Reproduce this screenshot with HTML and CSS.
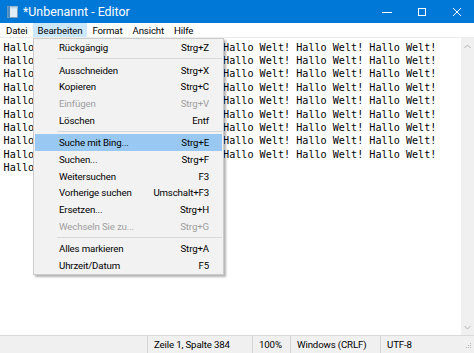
FILE: index.html
```html
<!DOCTYPE html>
<html lang="de">
<head>
  <meta charset="UTF-8" />
  <title>*Unbenannt - Editor</title>
  <link rel="stylesheet" href="styles.css">
</head>
<body>
  <div class="window">
    <div class="titlebar">
      <svg class="app-icon" width="11" height="12" viewBox="0 0 11 12">
        <rect x="0.5" y="0.5" width="10" height="11" fill="#e4eef7" stroke="#7d9fbd"/>
        <rect x="0.5" y="0.5" width="2.5" height="11" fill="#4f8cc4"/>
        <rect x="3" y="0.5" width="7.5" height="2" fill="#bcd3e8"/>
      </svg>
      <span class="title">*Unbenannt - Editor</span>
      <div class="controls">
        <span class="ctl"><svg width="10" height="10" viewBox="0 0 10 10"><line x1="0" y1="5.5" x2="10" y2="5.5" stroke="#fff" stroke-width="1"/></svg></span>
        <span class="ctl"><svg width="10" height="10" viewBox="0 0 10 10"><rect x="1.5" y="1.5" width="7" height="7" fill="none" stroke="#fff" stroke-width="1"/></svg></span>
        <span class="ctl"><svg width="10" height="10" viewBox="0 0 10 10"><path d="M1 1 L9 9 M9 1 L1 9" stroke="#fff" stroke-width="1"/></svg></span>
      </div>
    </div>

    <div class="menubar">
      <span class="menu-item">Datei</span>
      <span class="menu-item active">Bearbeiten</span>
      <span class="menu-item">Format</span>
      <span class="menu-item">Ansicht</span>
      <span class="menu-item">Hilfe</span>
    </div>

    <div class="main">
      <div class="editor">Hallo Welt! Hallo Welt! Hallo Welt! Hallo Welt! Hallo Welt! Hallo Welt!
Hallo Welt! Hallo Welt! Hallo Welt! Hallo Welt! Hallo Welt! Hallo Welt!
Hallo Welt! Hallo Welt! Hallo Welt! Hallo Welt! Hallo Welt! Hallo Welt!
Hallo Welt! Hallo Welt! Hallo Welt! Hallo Welt! Hallo Welt! Hallo Welt!
Hallo Welt! Hallo Welt! Hallo Welt! Hallo Welt! Hallo Welt! Hallo Welt!
Hallo Welt! Hallo Welt! Hallo Welt! Hallo Welt! Hallo Welt! Hallo Welt!
Hallo Welt! Hallo Welt! Hallo Welt! Hallo Welt! Hallo Welt! Hallo Welt!
Hallo Welt! Hallo Welt! Hallo Welt! Hallo Welt! Hallo Welt! Hallo Welt!
Hallo Welt! Hallo Welt! Hallo Welt! Hallo Welt! Hallo Welt! Hallo Welt!
Hallo Welt!</div>
      <div class="scrollbar">
        <svg width="7" height="5" viewBox="0 0 7 5"><path d="M0.5 4 L3.5 1 L6.5 4" fill="none" stroke="#b0b0b0" stroke-width="1"/></svg>
        <svg width="7" height="5" viewBox="0 0 7 5"><path d="M0.5 1 L3.5 4 L6.5 1" fill="none" stroke="#b0b0b0" stroke-width="1"/></svg>
      </div>
    </div>

    <div class="statusbar">
      <div class="cell fill"></div>
      <div class="cell pos">Zeile 1, Spalte 384</div>
      <div class="cell zoom">100%</div>
      <div class="cell eol">Windows (CRLF)</div>
      <div class="cell enc">UTF-8</div>
      <div class="grip">
        <svg width="8" height="8" viewBox="0 0 8 8" fill="#b8b8b8">
          <rect x="6" y="0" width="1" height="1"/>
          <rect x="4" y="2" width="1" height="1"/><rect x="6" y="2" width="1" height="1"/>
          <rect x="2" y="4" width="1" height="1"/><rect x="4" y="4" width="1" height="1"/><rect x="6" y="4" width="1" height="1"/>
        </svg>
      </div>
    </div>

    <div class="dropdown">
      <div class="row"><span>Rückgängig</span><span>Strg+Z</span></div>
      <div class="sep"></div>
      <div class="row"><span>Ausschneiden</span><span>Strg+X</span></div>
      <div class="row"><span>Kopieren</span><span>Strg+C</span></div>
      <div class="row disabled"><span>Einfügen</span><span>Strg+V</span></div>
      <div class="row"><span>Löschen</span><span>Entf</span></div>
      <div class="sep"></div>
      <div class="row hover"><span>Suche mit Bing...</span><span>Strg+E</span></div>
      <div class="row"><span>Suchen...</span><span>Strg+F</span></div>
      <div class="row"><span>Weitersuchen</span><span>F3</span></div>
      <div class="row"><span>Vorherige suchen</span><span>Umschalt+F3</span></div>
      <div class="row"><span>Ersetzen...</span><span>Strg+H</span></div>
      <div class="row disabled"><span>Wechseln Sie zu...</span><span>Strg+G</span></div>
      <div class="sep"></div>
      <div class="row"><span>Alles markieren</span><span>Strg+A</span></div>
      <div class="row"><span>Uhrzeit/Datum</span><span>F5</span></div>
    </div>
  </div>
</body>
</html>
```

FILE: styles.css
```css
body {
  margin: 0;
  background: #fff;
  font-family: Roboto, "Noto Sans", sans-serif;
}

.window {
  position: relative;
  width: 474px;
  height: 353px;
  display: flex;
  flex-direction: column;
  overflow: hidden;
}

/* Titelleiste */
.titlebar {
  height: 23px;
  background: #0078d7;
  display: flex;
  align-items: center;
  color: #fff;
}

.app-icon {
  margin-left: 7px;
  margin-right: 5px;
}

.title {
  font-size: 12.4px;
  flex: 1;
}

.controls {
  display: flex;
  height: 100%;
}

.ctl {
  width: 35px;
  display: flex;
  align-items: center;
  justify-content: center;
}

/* Menüleiste */
.menubar {
  height: 14px;
  border-bottom: 1px solid #ececec;
  display: flex;
  align-items: stretch;
  padding-left: 1px;
  font-size: 9.7px;
  letter-spacing: -0.15px;
  color: #000;
}

.menu-item {
  padding: 0 5px;
  display: flex;
  align-items: center;
}

.menu-item.active {
  background: #cce8ff;
}

/* Textbereich */
.main {
  flex: 1;
  display: flex;
  min-height: 0;
}

.editor {
  flex: 1;
  padding: 2.6px 0 0 3.6px;
  font-family: "DejaVu Sans Mono", monospace;
  font-size: 10.15px;
  line-height: 13.4px;
  white-space: pre;
  color: #000;
  overflow: hidden;
}

.scrollbar {
  width: 13px;
  background: #f0f0f0;
  display: flex;
  flex-direction: column;
  justify-content: space-between;
  align-items: center;
  padding: 6px 0 5px;
  box-sizing: border-box;
}

/* Statusleiste */
.statusbar {
  height: 18px;
  background: #f0f0f0;
  border-top: 1px solid #dadada;
  box-sizing: border-box;
  display: flex;
  font-size: 9.7px;
  letter-spacing: -0.15px;
  color: #000;
}

.cell {
  display: flex;
  align-items: center;
  padding-left: 6px;
  border-left: 1px solid #d4d4d4;
  box-sizing: border-box;
}

.cell.fill {
  flex: 1;
  border-left: none;
}

.pos { width: 105px; }
.zoom { width: 38px; }
.eol { width: 90px; }
.enc { width: 81px; }

.grip {
  width: 13px;
  display: flex;
  align-items: flex-end;
  justify-content: flex-end;
  padding: 0 2px 2px 0;
  box-sizing: border-box;
}

/* Menü Bearbeiten */
.dropdown {
  position: absolute;
  left: 33px;
  top: 38px;
  width: 191px;
  box-sizing: border-box;
  background: #f2f2f2;
  border: 1px solid #cccccc;
  padding: 0 1px;
  box-shadow: 2px 2px 2px rgba(0, 0, 0, 0.3);
  font-size: 9.7px;
  letter-spacing: -0.15px;
  color: #000;
}

.row {
  height: 16.7px;
  display: flex;
  align-items: center;
  justify-content: space-between;
  padding: 0 13px 0 24px;
}

.row.hover {
  background: #99c9f2;
}

.row.disabled {
  color: #a0a0a0;
}

.sep {
  height: 1px;
  background: #d7d7d7;
  margin: 2.5px 0 2.5px 22px;
}
```
